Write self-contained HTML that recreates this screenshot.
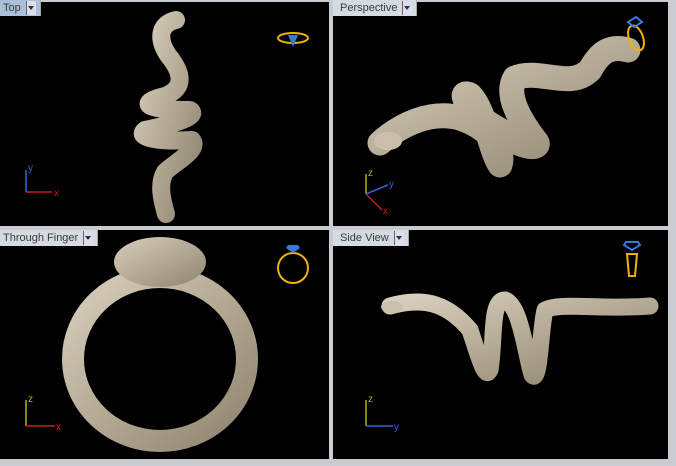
<!DOCTYPE html>
<html><head><meta charset="utf-8"><style>
html,body{margin:0;padding:0;width:676px;height:466px;overflow:hidden;background:#c8cbd0;font-family:"Liberation Sans",sans-serif}
.vp{position:absolute;background:#000;overflow:hidden}
.lbl{position:absolute;left:0;top:0;height:16px;line-height:16px;font-size:11px;color:#3a3a3a;background:#d6dbe2;padding:0 4px 0 3px;border-right:1px solid #9aa;}
.lbl b{display:inline-block;width:9px;height:14px;margin-left:5px;vertical-align:top;margin-top:1px;border-left:1px solid #666;position:relative;background:#dde}
.lbl b:after{content:"";position:absolute;left:1px;top:5px;border-left:3.5px solid transparent;border-right:3.5px solid transparent;border-top:4px solid #333}
svg{position:absolute;left:0;top:0}
</style></head><body>
<div class="vp" style="left:0;top:2px;width:329px;height:224px"></div>
<div class="vp" style="left:333px;top:2px;width:335px;height:224px"></div>
<div class="vp" style="left:0;top:230px;width:329px;height:229px"></div>
<div class="vp" style="left:333px;top:230px;width:335px;height:229px"></div>
<svg width="676" height="466" viewBox="0 0 676 466">
<defs>
<linearGradient id="g" x1="0" y1="0" x2="1" y2="1"><stop offset="0" stop-color="#d8cfbc"/><stop offset="1" stop-color="#8f846f"/></linearGradient>
</defs>
<g fill="none" stroke="url(#g)" stroke-linecap="round" stroke-linejoin="round">
<path d="M176,20 C158,24 158,40 168,55 C182,72 186,88 165,96 C140,102 140,110 190,110 C200,116 175,124 145,130 C135,138 160,142 192,140 C200,150 175,162 165,172 C158,184 162,200 166,214" stroke-width="18"/>
<path d="M380,143 C400,125 430,110 460,118 C490,128 505,150 500,165 C490,150 485,110 470,95 C455,88 470,115 500,130 C520,150 545,150 535,140 C520,120 505,95 515,78 C540,68 570,90 590,70 C600,52 610,45 628,50" stroke-width="25"/>
<ellipse cx="160" cy="359" rx="87" ry="82" stroke-width="22"/>
<path d="M390,306 C420,298 445,300 470,330 C480,360 485,380 490,370 C495,340 490,300 505,300 C520,305 525,350 532,375 C540,385 540,330 545,310 C560,302 600,310 650,306" stroke-width="17"/>
</g>
<ellipse cx="160" cy="262" rx="46" ry="25" fill="url(#g)"/>
<ellipse cx="388" cy="141" rx="14" ry="9" fill="#c9bfab"/>
<ellipse cx="392" cy="307" rx="11" ry="6" fill="#c9bfab"/>
<ellipse cx="293" cy="38" rx="15" ry="5" fill="none" stroke="#f0b400" stroke-width="2"/>
<path d="M288,35 L298,35 L293,47 Z" fill="#3a78e0"/>
<g fill="none" stroke="#f0b400" stroke-width="2"><ellipse cx="636" cy="38" rx="7" ry="13" transform="rotate(-20 636 38)"/></g>
<path d="M628,22 l8,-5 6,5 -8,5z" fill="none" stroke="#3a78e0" stroke-width="2"/>
<circle cx="293" cy="268" r="15" fill="none" stroke="#f0b400" stroke-width="2"/>
<path d="M288,245 h10 l2,3 -7,5 -7,-5z" fill="#3a78e0"/>
<path d="M626,242 h12 l2,3 -8,5 -8,-5z" fill="none" stroke="#3a78e0" stroke-width="2"/>
<path d="M627,254 h10 l-2,22 -6,0z" fill="none" stroke="#f0b400" stroke-width="2"/>
<g stroke-width="1.5" font-family="Liberation Sans,sans-serif" font-size="10">
<line x1="26" y1="192" x2="26" y2="170" stroke="#3a60e0"/><line x1="26" y1="192" x2="52" y2="192" stroke="#c02020"/>
<text x="28" y="171" fill="#3a60e0" stroke="none">y</text><text x="54" y="196" fill="#c02020" stroke="none">x</text>
<line x1="366" y1="194" x2="366" y2="174" stroke="#b0b020"/><line x1="366" y1="194" x2="388" y2="185" stroke="#3a60e0"/><line x1="366" y1="194" x2="382" y2="210" stroke="#c02020"/>
<text x="368" y="176" fill="#b0b020" stroke="none">z</text><text x="389" y="187" fill="#3a60e0" stroke="none">y</text><text x="383" y="214" fill="#c02020" stroke="none">x</text>
<line x1="26" y1="426" x2="26" y2="400" stroke="#b0b020"/><line x1="26" y1="426" x2="55" y2="426" stroke="#c02020"/>
<text x="28" y="402" fill="#b0b020" stroke="none">z</text><text x="56" y="430" fill="#c02020" stroke="none">x</text>
<line x1="366" y1="426" x2="366" y2="400" stroke="#b0b020"/><line x1="366" y1="426" x2="393" y2="426" stroke="#3a60e0"/>
<text x="368" y="402" fill="#b0b020" stroke="none">z</text><text x="394" y="430" fill="#3a60e0" stroke="none">y</text>
</g>
</svg>
<div class="lbl" style="background:#aabfd8">Top<b></b></div>
<div class="lbl" style="left:333px;padding-left:7px">Perspective<b></b></div>
<div class="lbl" style="top:230px">Through Finger<b></b></div>
<div class="lbl" style="left:333px;top:230px;padding-left:7px">Side View<b></b></div>
</body></html>
